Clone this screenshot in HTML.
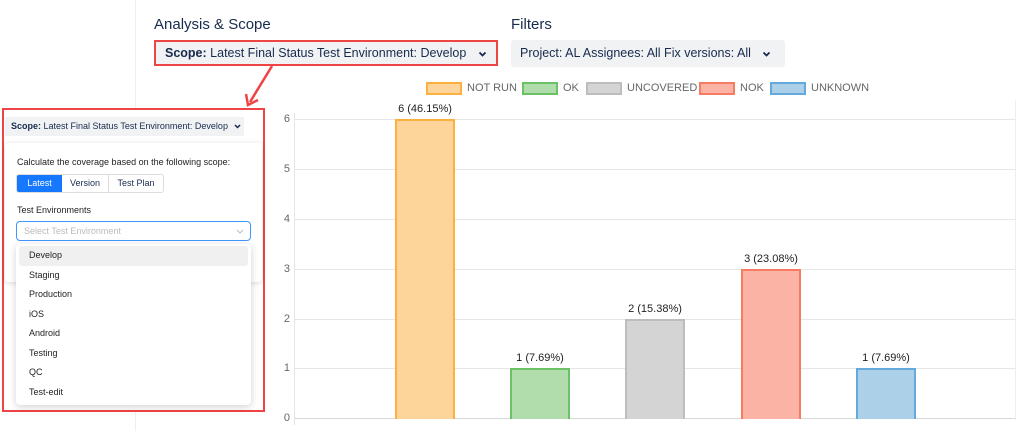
<!DOCTYPE html><html><head><style>
*{box-sizing:border-box;margin:0;padding:0}
body{width:1024px;height:431px;background:#fff;position:relative;overflow:hidden;font-family:"Liberation Sans",Arial,sans-serif;color:#172b4d}
.a{position:absolute}
.t{font-size:11px;color:#222;white-space:nowrap}
.yl{font-size:11px;color:#666;width:12px;text-align:right;left:278px}
.g{left:294px;width:721px;height:1px;background:#e6e6e6}
.bar{border:2px solid;border-bottom:none}
.lg{width:36px;height:13px;border:2px solid}
.lt{font-size:11px;color:#666}
.item{height:19.5px;font-size:9px;color:#222;padding-left:10px;line-height:19.5px}
.chev{display:inline-block;vertical-align:middle}
</style></head><body>
<div class="a" style="left:135px;top:0;width:1px;height:431px;background:#eee"></div>
<div class="a" style="left:154px;top:16px;font-size:15px;color:#172b4d">Analysis &amp; Scope</div>
<div class="a" style="left:511px;top:16px;font-size:15px;color:#172b4d">Filters</div>
<div class="a" style="left:154px;top:40px;width:344px;height:26px;background:#f1f2f4;border:2px solid #ef4444;font-size:12.5px;line-height:22px;padding-left:9px;white-space:nowrap"><b>Scope:</b> Latest Final Status Test Environment: Develop <svg class="chev" style="margin-left:8px" width="9" height="6"><polyline points="1.5,1.5 4.5,4.5 7.5,1.5" fill="none" stroke="#172b4d" stroke-width="1.8"/></svg></div>
<div class="a" style="left:511px;top:40px;width:274px;height:27px;background:#f1f2f4;border-radius:3px;font-size:12.5px;line-height:27px;padding-left:9px;white-space:nowrap">Project: AL Assignees: All Fix versions: All <svg class="chev" style="margin-left:8px" width="9" height="6"><polyline points="1.5,1.5 4.5,4.5 7.5,1.5" fill="none" stroke="#172b4d" stroke-width="1.8"/></svg></div>
<svg class="a" style="left:240px;top:60px" width="40" height="52"><line x1="32" y1="6" x2="10" y2="42" stroke="#ef4444" stroke-width="2.5"/><polyline points="6,34 8,45 18,40" fill="none" stroke="#ef4444" stroke-width="2.5"/></svg>
<div class="a lg" style="left:426px;top:82px;background:#fdd49a;border-color:#fcb040"></div><div class="a lt" style="left:467px;top:82px">NOT RUN</div>
<div class="a lg" style="left:522px;top:82px;background:#b1dcab;border-color:#6cc065"></div><div class="a lt" style="left:563px;top:82px">OK</div>
<div class="a lg" style="left:586px;top:82px;background:#d4d4d4;border-color:#bdbdbd"></div><div class="a lt" style="left:627px;top:82px">UNCOVERED</div>
<div class="a lg" style="left:699px;top:82px;background:#fbb3a5;border-color:#f57c62"></div><div class="a lt" style="left:740px;top:82px">NOK</div>
<div class="a lg" style="left:770px;top:82px;background:#acd0e8;border-color:#63a9dc"></div><div class="a lt" style="left:811px;top:82px">UNKNOWN</div>
<div class="a g" style="top:119px"></div><div class="a g" style="top:169px"></div><div class="a g" style="top:219px"></div><div class="a g" style="top:269px"></div><div class="a g" style="top:319px"></div><div class="a g" style="top:368px"></div><div class="a g" style="top:418px;background:#d8d8d8"></div>
<div class="a" style="left:294px;top:113px;width:1px;height:312px;background:#e6e6e6"></div>
<div class="a" style="left:1015px;top:100px;width:1px;height:320px;background:#eee"></div>
<div class="a yl" style="top:113px">6</div><div class="a yl" style="top:163px">5</div><div class="a yl" style="top:213px">4</div><div class="a yl" style="top:263px">3</div><div class="a yl" style="top:313px">2</div><div class="a yl" style="top:362px">1</div><div class="a yl" style="top:412px">0</div>
<div class="a bar" style="left:395px;top:119px;width:60px;height:300px;background:#fdd49a;border-color:#fcb040"></div>
<div class="a bar" style="left:510px;top:368px;width:60px;height:51px;background:#b1dcab;border-color:#6cc065"></div>
<div class="a bar" style="left:625px;top:319px;width:60px;height:100px;background:#d4d4d4;border-color:#bdbdbd"></div>
<div class="a bar" style="left:741px;top:269px;width:60px;height:150px;background:#fbb3a5;border-color:#f57c62"></div>
<div class="a bar" style="left:856px;top:368px;width:60px;height:51px;background:#acd0e8;border-color:#63a9dc"></div>
<div class="a t" style="left:385px;top:103px;width:80px;text-align:center">6 (46.15%)</div>
<div class="a t" style="left:500px;top:352px;width:80px;text-align:center">1 (7.69%)</div>
<div class="a t" style="left:615px;top:303px;width:80px;text-align:center">2 (15.38%)</div>
<div class="a t" style="left:731px;top:253px;width:80px;text-align:center">3 (23.08%)</div>
<div class="a t" style="left:846px;top:352px;width:80px;text-align:center">1 (7.69%)</div>
<div class="a" style="left:2px;top:108px;width:263px;height:304px;border:2px solid #ef4444;background:#fff"></div>
<div class="a" style="left:5px;top:117px;width:239px;height:19px;background:#f1f2f4;font-size:9px;line-height:19px;padding-left:6px;white-space:nowrap"><b>Scope:</b> Latest Final Status Test Environment: Develop <svg class="chev" style="margin-left:4px" width="7" height="5"><polyline points="1,1 3.5,3.5 6,1" fill="none" stroke="#172b4d" stroke-width="1.5"/></svg></div>
<div class="a" style="left:5px;top:143px;width:257px;height:139px;background:#fff;border-radius:4px;box-shadow:0 1px 6px rgba(0,0,0,.15)"></div>
<div class="a" style="left:17px;top:157px;font-size:9px;color:#222">Calculate the coverage based on the following scope:</div>
<div class="a" style="left:16px;top:174px;width:148px;height:19px;border:1px solid #ddd;border-radius:3px;font-size:9px;line-height:17px;white-space:nowrap;display:flex"><span style="background:#1677ff;color:#fff;width:45px;text-align:center;border-radius:2px 0 0 2px">Latest</span><span style="width:47px;text-align:center;border-right:1px solid #ddd">Version</span><span style="width:54px;text-align:center">Test Plan</span></div>
<div class="a" style="left:17px;top:205px;font-size:9px;color:#222">Test Environments</div>
<div class="a" style="left:16px;top:221px;width:235px;height:20px;border:1px solid #4096ff;border-radius:4px;font-size:9px;color:#bbb;line-height:18px;padding-left:7px">Select Test Environment<svg style="position:absolute;right:6px;top:7px" width="8" height="5"><polyline points="1,1 4,4 7,1" fill="none" stroke="#bbb" stroke-width="1"/></svg></div>
<div class="a" style="left:16px;top:244px;width:235px;height:161px;background:#fff;border-radius:4px;box-shadow:0 2px 8px rgba(0,0,0,.18);padding:2px 3px">
<div class="item" style="background:#f0f0f0;border-radius:3px">Develop</div><div class="item">Staging</div><div class="item">Production</div><div class="item">iOS</div><div class="item">Android</div><div class="item">Testing</div><div class="item">QC</div><div class="item">Test-edit</div></div>
</body></html>
